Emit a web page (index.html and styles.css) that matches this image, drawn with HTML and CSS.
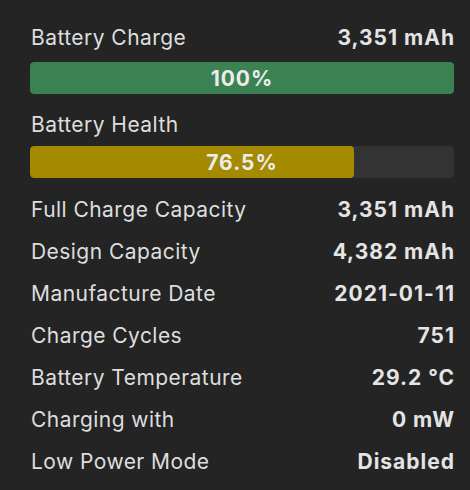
FILE: index.html
```html
<!DOCTYPE html>
<html>
<head>
<meta charset="utf-8">
<link rel="stylesheet" href="styles.css">
</head>
<body>
<div class="panel">
  <div class="row first"><span class="label">Battery Charge</span><span class="value">3,351 mAh</span></div>
  <div class="bar bar-charge"><div class="fill fill-green" style="width:100%"></div><span class="bar-text">100%</span></div>
  <div class="row second"><span class="label">Battery Health</span></div>
  <div class="bar bar-health"><div class="fill fill-yellow" style="width:76.5%"></div><span class="bar-text">76.5%</span></div>
  <div class="list">
    <div class="row"><span class="label">Full Charge Capacity</span><span class="value">3,351 mAh</span></div>
    <div class="row"><span class="label">Design Capacity</span><span class="value">4,382 mAh</span></div>
    <div class="row"><span class="label">Manufacture Date</span><span class="value">2021-01-11</span></div>
    <div class="row"><span class="label">Charge Cycles</span><span class="value">751</span></div>
    <div class="row"><span class="label">Battery Temperature</span><span class="value">29.2 °C</span></div>
    <div class="row"><span class="label">Charging with</span><span class="value">0 mW</span></div>
    <div class="row"><span class="label">Low Power Mode</span><span class="value">Disabled</span></div>
  </div>
</div>
</body>
</html>
```
FILE: styles.css
```css
html, body {
  margin: 0;
  padding: 0;
  background: #242424;
  height: 100%;
}
.panel {
  padding: 16px 16px 0 30px;
  font-family: Inter, "Noto Sans", sans-serif;
  font-size: 21px;
  color: #dedede;
}
.row {
  display: flex;
  justify-content: space-between;
  align-items: center;
  height: 42px;
}
.row.second {
  height: 40px;
  margin-top: 10px;
}
.label {
  padding-left: 1px;
  letter-spacing: 0.45px;
}
.value {
  font-weight: 700;
  color: #e4e4e4;
  letter-spacing: 1px;
  margin-right: -1px;
}
.bar {
  position: relative;
  height: 32px;
  border-radius: 4px;
  background: #333333;
  overflow: hidden;
  display: flex;
  align-items: center;
  justify-content: center;
}
.bar-charge {
  margin-top: 4px;
}
.bar-health {
  margin-top: 2px;
}
.fill {
  position: absolute;
  left: 0;
  top: 0;
  bottom: 0;
  border-radius: 4px;
}
.fill-green {
  background: #3b8253;
}
.fill-yellow {
  background: #a38a00;
}
.bar-text {
  position: relative;
  font-weight: 700;
  color: #ececec;
  font-size: 21px;
  letter-spacing: 1px;
}
.list {
  margin-top: 10px;
}
```
